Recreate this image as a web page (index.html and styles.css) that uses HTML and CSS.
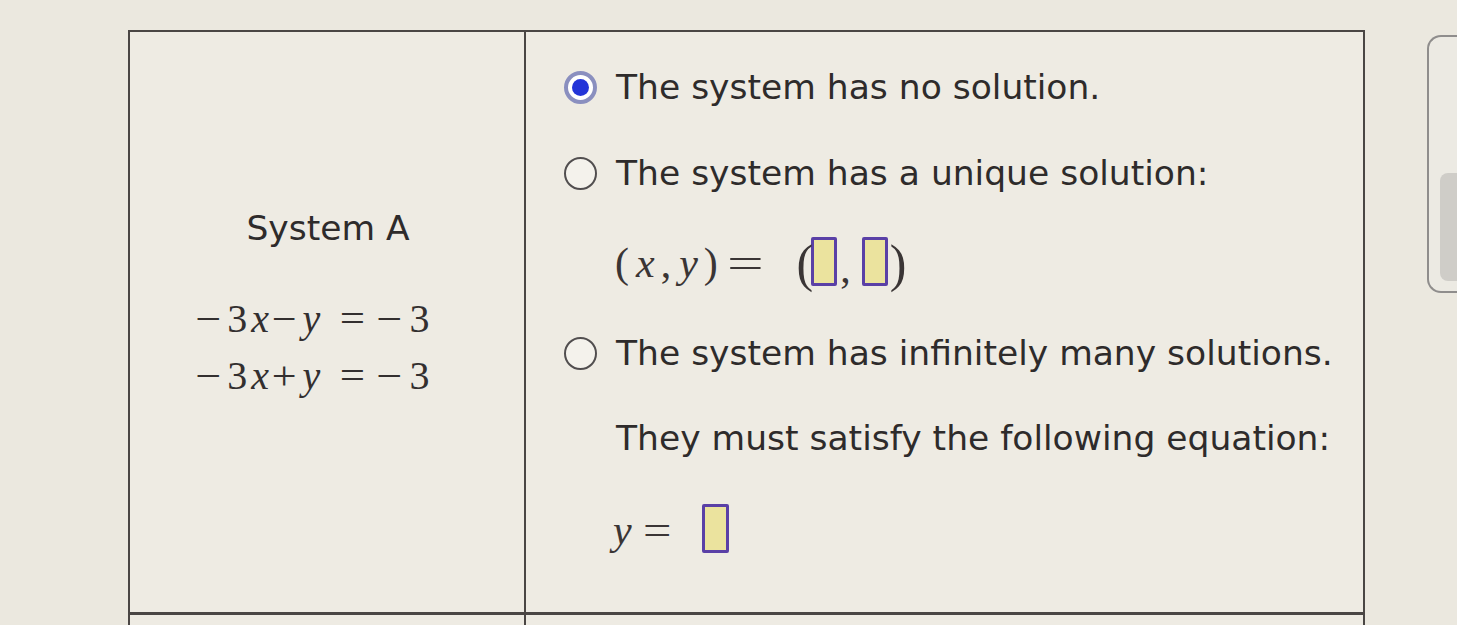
FILE: index.html
```html
<!DOCTYPE html>
<html>
<head>
<meta charset="utf-8">
<link rel="stylesheet" href="styles.css">
</head>
<body>
<div class="page">
  <div class="table">
    <div class="cell left">
      <div class="sys-title">System A</div>
      <div class="eqs">
        <div class="eq"><span class="t m1">−</span><span class="t m2">3</span><span class="t m3"><i>x</i></span><span class="t m4">−</span><span class="t m5"><i>y</i></span><span class="t m6">=</span><span class="t m7">−</span><span class="t">3</span></div>
        <div class="eq"><span class="t m1">−</span><span class="t m2">3</span><span class="t m3"><i>x</i></span><span class="t m4">+</span><span class="t m5"><i>y</i></span><span class="t m6">=</span><span class="t m7">−</span><span class="t">3</span></div>
      </div>
    </div>
    <div class="cell right">
      <div class="opt o1">
        <span class="radio checked"><span class="dot"></span></span>
        <span class="txt">The system has no solution.</span>
      </div>
      <div class="opt o2">
        <span class="radio"></span>
        <span class="txt">The system has a unique solution:</span>
      </div>
      <div class="mathline pair">
        <span class="t p1">(</span><span class="t p2"><i>x</i></span><span class="t p3">,</span><span class="t p4"><i>y</i></span><span class="t p5">)</span><span class="t eqwide p6">=</span><span class="t bigparen bp1">(</span><span class="box"></span><span class="t comma2">,</span><span class="box"></span><span class="t bigparen bp2">)</span>
      </div>
      <div class="opt o3">
        <span class="radio"></span>
        <span class="txt">The system has infinitely many solutions.</span>
      </div>
      <div class="plain">They must satisfy the following equation:</div>
      <div class="mathline yeq">
        <span class="t y1"><i>y</i></span><span class="t eqmid y2">=</span><span class="box"></span>
      </div>
    </div>
    <div class="cell left next"></div>
    <div class="cell right next"></div>
  </div>
  <div class="side">
    <div class="side-inner"></div>
  </div>
</div>
</body>
</html>
```

FILE: styles.css
```css
html, body {
  margin: 0;
  padding: 0;
  background: #ebe8df;
  overflow: hidden;
  height: 625px;
}
.page {
  display: flex;
  align-items: flex-start;
  padding: 30px 0 0 128px;
  gap: 62px;
}
.table {
  display: grid;
  grid-template-columns: 396px 839px;
  grid-template-rows: 583px 200px;
  border-top: 2px solid #4a4644;
  border-left: 2px solid #4a4644;
  background: #eeebe3;
}
.cell {
  border-right: 2px solid #4a4644;
  border-bottom: 3px solid #4a4644;
  box-sizing: border-box;
  color: #2e2b2b;
}
.left {
  display: flex;
  flex-direction: column;
  align-items: center;
  padding-top: 176px;
}
.sys-title {
  font-family: "DejaVu Sans", Verdana, sans-serif;
  font-size: 34.5px;
  line-height: 40px;
  margin-left: 2px;
}
.eqs {
  margin-top: 42px;
  margin-right: 28px;
}
.eq {
  font-family: "Liberation Serif", "Times New Roman", serif;
  font-size: 40px;
  line-height: 57px;
  white-space: nowrap;
  color: #332f2f;
}
.t { display: inline-block; }
i { font-style: italic; }
.m1 { margin-right: 8px; transform: scaleX(1.15); }
.m2 { margin-right: 4px; }
.m3 { margin-right: 4px; }
.m4 { margin-right: 7px; transform: scaleX(1.1); }
.m5 { margin-right: 21px; }
.m6 { margin-right: 14px; transform: scaleX(1.12); }
.m7 { margin-right: 9px; transform: scaleX(1.15); }
.right {
  padding: 35px 0 0 38px;
  display: flex;
  flex-direction: column;
}
.opt {
  display: flex;
  align-items: center;
  height: 40px;
  gap: 19px;
}
.o1 { margin-bottom: 46px; }
.o2 { margin-bottom: 42px; }
.o3 { margin-bottom: 45px; }
.txt, .plain {
  font-family: "DejaVu Sans", Verdana, sans-serif;
  font-size: 34.5px;
  line-height: 40px;
  white-space: nowrap;
}
.plain {
  margin-left: 52px;
  margin-bottom: 44px;
}
.radio {
  width: 33px;
  height: 33px;
  box-sizing: border-box;
  border-radius: 50%;
  border: 2px solid #514e4f;
  background: #f4f2ec;
  display: inline-flex;
  align-items: center;
  justify-content: center;
  flex: none;
}
.radio.checked {
  border: 4px solid #8a8fbf;
  background: #ffffff;
}
.radio .dot {
  width: 17px;
  height: 17px;
  border-radius: 50%;
  background: #2334d8;
}
.mathline {
  font-family: "Liberation Serif", "Times New Roman", serif;
  font-size: 42px;
  color: #3a3535;
  display: flex;
  align-items: center;
  margin-left: 52px;
  height: 56px;
  white-space: nowrap;
}
.pair { margin-bottom: 42px; }
.p1 { margin-left: -1px; margin-right: 7px; }
.p2 { margin-right: 6px; }
.p3 { margin-right: 8px; }
.p4 { margin-right: 6px; }
.p5 { margin-right: 9px; }
.eqwide {
  transform: scaleX(1.55);
  transform-origin: left center;
}
.eqmid {
  transform: scaleX(1.2);
  transform-origin: left center;
}
.p6 { margin-right: 46px; }
.bigparen {
  font-size: 50px;
  line-height: 50px;
  transform: scaleY(1.05);
}
.bp1 { margin-right: -2px; }
.bp2 { margin-left: 2px; }
.comma2 {
  margin: 10px 11px 0 3px;
}
.box {
  display: inline-block;
  width: 26px;
  height: 49px;
  box-sizing: border-box;
  border: 3px solid #5a40a6;
  background: #ebe39e;
  border-radius: 2px;
  margin-top: -4px;
}
.yeq .box { width: 27px; }
.y1 { margin-left: -3px; margin-right: 11px; }
.y2 { margin-right: 36px; }
.next {
  border-bottom: none;
}
.side {
  margin-top: 5px;
  width: 60px;
  height: 258px;
  box-sizing: border-box;
  border: 2px solid #8f8d8c;
  border-right: none;
  border-radius: 14px 0 0 14px;
  background: #eceae3;
  padding: 136px 0 0 11px;
}
.side-inner {
  height: 108px;
  background: #cfcdc8;
  border-radius: 8px 0 0 8px;
}
```
